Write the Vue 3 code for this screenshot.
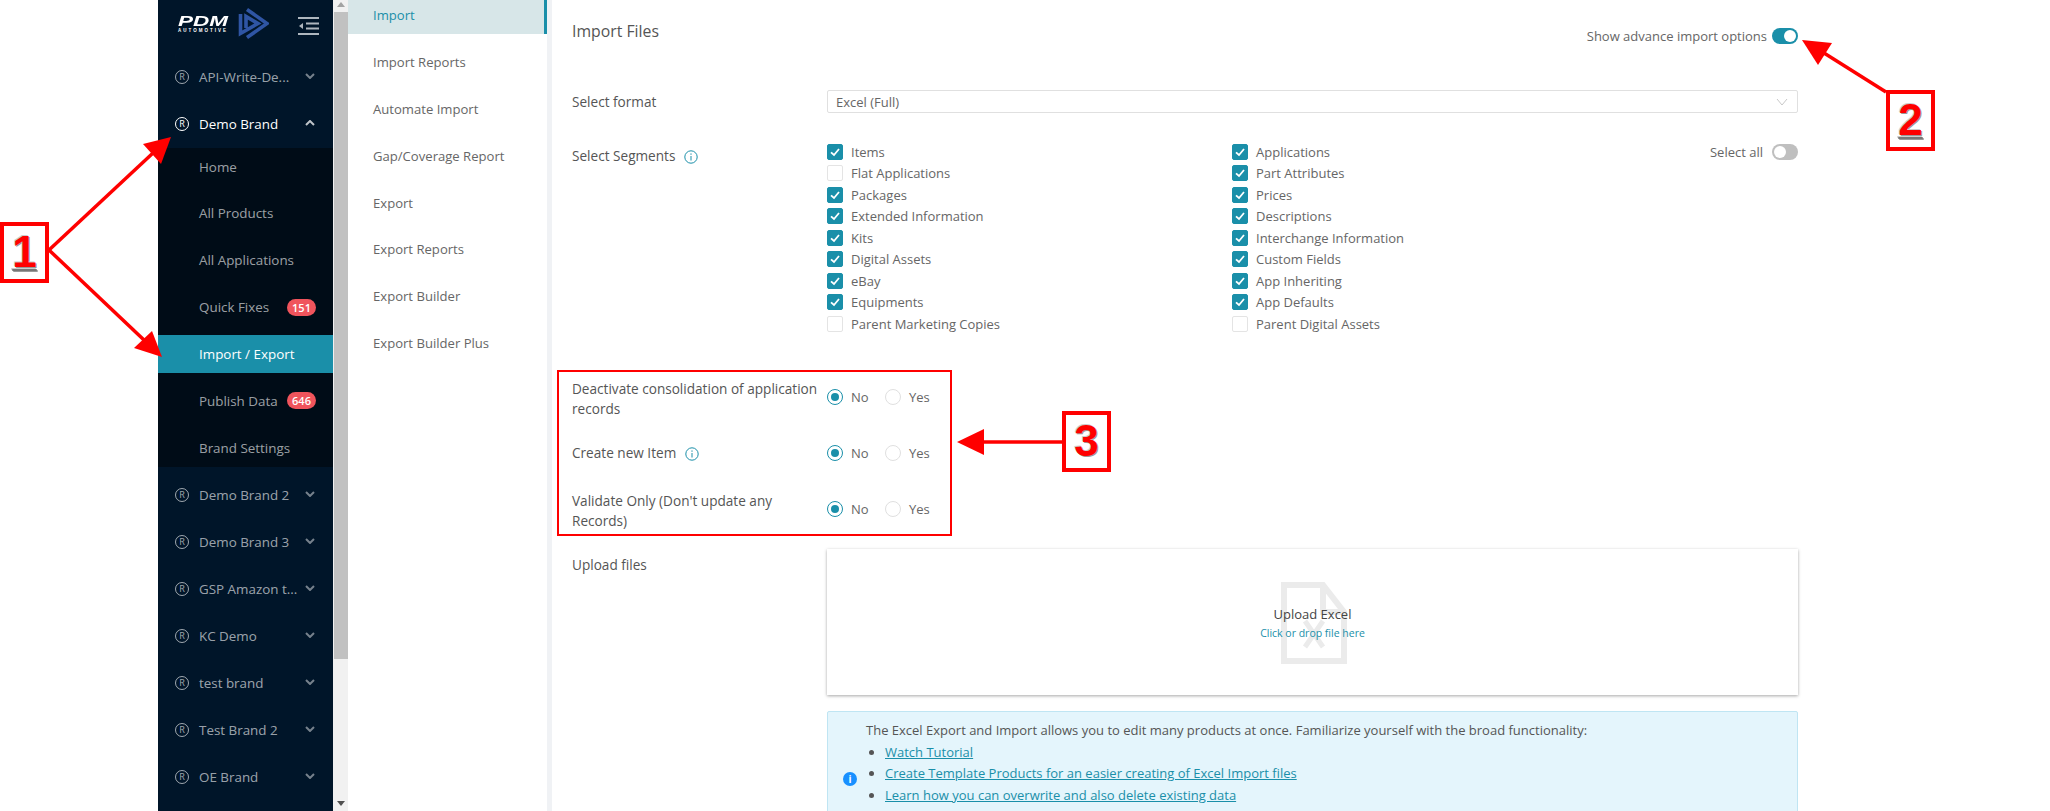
<script setup>
const brandsTop = ['API-Write-De...']
const sub = [
  { t: 'Home' }, { t: 'All Products' }, { t: 'All Applications' },
  { t: 'Quick Fixes', badge: 151 }, { t: 'Import / Export', active: true },
  { t: 'Publish Data', badge: 646 }, { t: 'Brand Settings' }
]
const brandsBottom = ['Demo Brand 2', 'Demo Brand 3', 'GSP Amazon t...', 'KC Demo', 'test brand', 'Test Brand 2', 'OE Brand']
const menu = ['Import', 'Import Reports', 'Automate Import', 'Gap/Coverage Report', 'Export', 'Export Reports', 'Export Builder', 'Export Builder Plus']
const col1 = [['Items', 1], ['Flat Applications', 0], ['Packages', 1], ['Extended Information', 1], ['Kits', 1], ['Digital Assets', 1], ['eBay', 1], ['Equipments', 1], ['Parent Marketing Copies', 0]]
const col2 = [['Applications', 1], ['Part Attributes', 1], ['Prices', 1], ['Descriptions', 1], ['Interchange Information', 1], ['Custom Fields', 1], ['App Inheriting', 1], ['App Defaults', 1], ['Parent Digital Assets', 0]]
</script>

<template>
  <div class="page">
    <aside class="sidebar">
      <div class="logo-row">
        <div class="logo-text"><span class="pdm">PDM</span><span class="auto">AUTOMOTIVE</span></div>
        <svg class="logo-mark" viewBox="0 0 31 31" width="31" height="31">
          <path d="M9 1.5 L29 15.5 L9 29.5" fill="none" stroke="#2f55a4" stroke-width="3.6" />
          <path d="M2.5 6 V25.5 L20 15.5 L8 8.5 V20" fill="none" stroke="#2f55a4" stroke-width="3.6" />
        </svg>
        <svg class="collapse" viewBox="0 0 21 18" width="21" height="18">
          <path d="M0 1 H21 M8 6.5 H21 M8 11.5 H21 M0 17 H21" stroke="#aeb6be" stroke-width="2" fill="none" />
          <path d="M1 9 L5 6 V12 Z" fill="#aeb6be" />
        </svg>
      </div>
      <div v-for="b in brandsTop" :key="b" class="brand">
        <span class="reg">R</span><span class="brand-name">{{ b }}</span>
        <svg class="chev" viewBox="0 0 10 6" width="10" height="6"><path d="M1 1 L5 5 L9 1" /></svg>
      </div>
      <div class="brand open">
        <span class="reg">R</span><span class="brand-name">Demo Brand</span>
        <svg class="chev" viewBox="0 0 10 6" width="10" height="6"><path d="M1 5 L5 1 L9 5" /></svg>
      </div>
      <div class="sublist">
        <div v-for="s in sub" :key="s.t" class="subitem" :class="{ active: s.active }">
          <span>{{ s.t }}</span>
          <span v-if="s.badge" class="badge">{{ s.badge }}</span>
        </div>
      </div>
      <div v-for="b in brandsBottom" :key="b" class="brand">
        <span class="reg">R</span><span class="brand-name">{{ b }}</span>
        <svg class="chev" viewBox="0 0 10 6" width="10" height="6"><path d="M1 1 L5 5 L9 1" /></svg>
      </div>
    </aside>

    <div class="scrollbar">
      <span class="arrow up"></span>
      <div class="thumb"></div>
      <span class="arrow down"></span>
    </div>

    <nav class="menu">
      <div v-for="(m, i) in menu" :key="m" class="menu-item" :class="{ active: i === 0 }">{{ m }}</div>
    </nav>
    <div class="strip"></div>

    <main class="main">
      <header class="head">
        <h1 class="title">Import Files</h1>
        <div class="toggle-wrap">
          <span>Show advance import options</span>
          <span class="switch on"><i></i></span>
        </div>
      </header>

      <section class="row format">
        <label class="lbl">Select format</label>
        <div class="select">
          <span>Excel (Full)</span>
          <svg viewBox="0 0 12 8" width="12" height="8"><path d="M1 1 L6 7 L11 1" fill="none" stroke="#c8c8c8" stroke-width="1" /></svg>
        </div>
      </section>

      <section class="row segs">
        <label class="lbl seg-lbl">Select Segments
          <svg class="info" viewBox="0 0 14 14" width="14" height="14"><circle cx="7" cy="7" r="6.2" /><path d="M7 6 V10.5 M7 3.4 V4.8" /></svg>
        </label>
        <div class="seg-cols">
          <div class="col one">
            <div v-for="c in col1" :key="c[0]" class="check-row">
              <span class="box" :class="{ on: c[1] }"><svg v-if="c[1]" viewBox="0 0 16 16" width="16" height="16"><path d="M4 8.3 L7 11 L12 5" /></svg></span>
              <span>{{ c[0] }}</span>
            </div>
          </div>
          <div class="col">
            <div v-for="c in col2" :key="c[0]" class="check-row">
              <span class="box" :class="{ on: c[1] }"><svg v-if="c[1]" viewBox="0 0 16 16" width="16" height="16"><path d="M4 8.3 L7 11 L12 5" /></svg></span>
              <span>{{ c[0] }}</span>
            </div>
          </div>
          <div class="select-all">
            <span>Select all</span>
            <span class="switch"><i></i></span>
          </div>
        </div>
      </section>

      <section class="row adv first">
        <label class="lbl">Deactivate consolidation of application records</label>
        <div class="radios lift">
          <span class="radio on"></span><span class="r-no">No</span><span class="radio"></span><span>Yes</span>
        </div>
      </section>
      <section class="row adv second">
        <label class="lbl">Create new Item
          <svg class="info" viewBox="0 0 14 14" width="14" height="14"><circle cx="7" cy="7" r="6.2" /><path d="M7 6 V10.5 M7 3.4 V4.8" /></svg>
        </label>
        <div class="radios">
          <span class="radio on"></span><span class="r-no">No</span><span class="radio"></span><span>Yes</span>
        </div>
      </section>
      <section class="row adv third">
        <label class="lbl">Validate Only (Don't update any Records)</label>
        <div class="radios lift">
          <span class="radio on"></span><span class="r-no">No</span><span class="radio"></span><span>Yes</span>
        </div>
      </section>

      <section class="row upload-row">
        <label class="lbl upload-lbl">Upload files</label>
        <div>
          <div class="upload">
            <svg class="file" viewBox="0 0 66 82" width="66" height="82">
              <path d="M3 3 H42 L63 30 V79 H3 Z M42 3 V30 H63" fill="none" stroke="#ebebeb" stroke-width="6" />
              <path d="M24 39 L42 65 M42 39 L24 65" fill="none" stroke="#ebebeb" stroke-width="5" />
            </svg>
            <div class="up-title">Upload Excel</div>
            <div class="up-sub">Click or drop file here</div>
          </div>
          <div class="alert">
            <span class="alert-icon">i</span>
            <div class="alert-body">
              <div>The Excel Export and Import allows you to edit many products at once. Familiarize yourself with the broad functionality:</div>
              <ul>
                <li><a>Watch Tutorial</a></li>
                <li><a>Create Template Products for an easier creating of Excel Import files</a></li>
                <li><a>Learn how you can overwrite and also delete existing data</a></li>
              </ul>
            </div>
          </div>
        </div>
      </section>
    </main>

    <svg class="arrows" width="2050" height="811" viewBox="0 0 2050 811">
      <g fill="#ff0000" stroke="none">
        <path d="M171 137 L143 144 L161 164 Z" />
        <path d="M162 357 L134 348 L152 331 Z" />
        <path d="M1802 40 L1832 43 L1818 65 Z" />
        <path d="M957 442 L984 429 V455 Z" />
      </g>
      <g stroke="#ff0000" stroke-width="3.5" fill="none">
        <path d="M49 250 L153 153" />
        <path d="M49 250 L144 340" />
        <path d="M1886 92 L1824 53" />
        <path d="M1062 442 H984" />
      </g>
    </svg>
    <div class="note n1">1</div>
    <div class="note n2">2</div>
    <div class="note n3">3</div>
    <div class="frame"></div>
  </div>
</template>

<style>
html, body { margin: 0; padding: 0; background: #fff; }
</style>

<style scoped>
.page {
  position: relative;
  display: flex;
  width: 2050px;
  height: 811px;
  overflow: hidden;
  padding-left: 158px;
  box-sizing: border-box;
  background: #fff;
  font-family: "Open Sans", "Noto Sans", sans-serif;
  font-size: 13px;
  color: #666;
}
.sidebar { width: 175px; flex: none; background: #001529; color: rgba(255,255,255,.62); font-size: 13.4px; }
.logo-row { height: 53.5px; position: relative; display: flex; align-items: flex-start; box-sizing: border-box; padding: 8px 0 0 20px; }
.logo-text { display: flex; flex-direction: column; width: 60px; margin-top: 6px; color: #fff; }
.pdm { font: italic 700 15px/13px "Liberation Sans", sans-serif; transform: scaleX(1.5); transform-origin: left; }
.auto { font: 700 4.5px/6px "Liberation Sans", sans-serif; letter-spacing: 2px; margin-top: 1px; white-space: nowrap; }
.collapse { margin: 9px 0 0 29px; }
.brand { height: 47px; display: flex; align-items: center; padding-left: 17px; position: relative; }
.brand.open { color: #fff; }
.reg {
  width: 14px; height: 14px; border: 1px solid currentColor; border-radius: 50%; box-sizing: border-box;
  font-size: 9px; line-height: 12px; text-align: center; margin-right: 10px; flex: none;
}
.brand-name { white-space: nowrap; }
.chev { position: absolute; left: 147px; top: 19px; fill: none; stroke: currentColor; stroke-width: 2; opacity: .75; }
.sublist { background: #000c17; }
.subitem { height: 38px; margin-bottom: 8.9px; padding-left: 41px; display: flex; align-items: center; position: relative; }
.subitem:last-child { margin-bottom: 5px; }
.subitem.active { background: #1a8fa9; color: #fff; }
.badge {
  position: absolute; left: 129px; top: 10.5px; width: 29px; height: 17px; border-radius: 9px;
  background: #f0545c; color: #fff; text-align: center; font-size: 11px; line-height: 17px; font-weight: 600;
}
.scrollbar { width: 15px; flex: none; background: #f1f1f1; position: relative; }
.thumb { position: absolute; top: 12px; left: 1px; right: 0; height: 647px; background: #c1c1c1; }
.arrow { position: absolute; left: 4px; width: 0; height: 0; border-left: 4px solid transparent; border-right: 4px solid transparent; }
.arrow.up { top: 2px; border-bottom: 5px solid #a3a3a3; }
.arrow.down { bottom: 5px; border-top: 5px solid #505050; }
.menu { width: 199px; flex: none; margin-top: -4px; box-sizing: border-box; font-size: 13.1px; }
.menu-item { height: 38px; margin-bottom: 8.9px; padding-left: 25px; display: flex; align-items: center; box-sizing: border-box; color: #666; }
.menu-item.active { background: #d7e6e8; color: #1a8fa9; border-right: 3px solid #1a8fa9; }
.strip { width: 5px; flex: none; background: #f0f2f5; }
.main { flex: 1; min-width: 0; padding: 0 252px 0 20px; overflow: hidden; }
.head { height: 72px; display: flex; justify-content: space-between; align-items: center; }
.title { margin: 0 0 10px; font-size: 15.8px; font-weight: 400; color: #555; }
.toggle-wrap, .select-all { display: flex; align-items: center; gap: 5px; }
.switch { width: 26px; height: 16px; border-radius: 8px; background: #bfbfbf; position: relative; display: inline-block; }
.switch i { position: absolute; left: 2px; top: 2px; width: 12px; height: 12px; border-radius: 50%; background: #fff; }
.switch.on { background: #1a8fa9; }
.switch.on i { left: 12px; }
.row { display: grid; grid-template-columns: 255px 1fr; }
.lbl { color: #555; line-height: 20px; font-weight: 500; font-size: 13.6px; }
.format { margin-top: 18px; align-items: center; }
.select {
  height: 23px; box-sizing: border-box; border: 1px solid #e0e0e0; border-radius: 2px; display: flex;
  align-items: center; justify-content: space-between; padding: 0 9px 0 8px;
}
.segs { margin-top: 27.75px; }
.seg-lbl { padding-top: 5.25px; }
.info { margin-left: 5px; vertical-align: -2.5px; fill: none; stroke: #1a8fa9; stroke-width: 1; }
.seg-cols { display: flex; }
.col { flex: none; }
.col.one { width: 405px; }
.select-all { margin-left: auto; height: 21.5px; gap: 9px; }
.check-row { height: 21.5px; display: flex; align-items: center; gap: 8px; }
.box { width: 16px; height: 16px; border: 1px solid #e4e4e4; border-radius: 2px; box-sizing: border-box; position: relative; background: #fff; flex: none; }
.box.on { background: #1a8fa9; border-color: #1a8fa9; }
.box svg { position: absolute; left: -1px; top: -1px; fill: none; stroke: #fff; stroke-width: 1.8; }
.adv { align-items: center; }
.adv.first { margin-top: 44.75px; }
.adv.second { margin-top: 24px; }
.adv.third { margin-top: 28px; }
.radios { display: flex; align-items: center; }
.radios.lift { margin-bottom: 4px; }
.radio { width: 16px; height: 16px; border: 1px solid #e0e0e0; border-radius: 50%; box-sizing: border-box; position: relative; margin-right: 8px; flex: none; }
.radio.on { border-color: #1a8fa9; }
.radio.on::after { content: ""; position: absolute; left: 3px; top: 3px; width: 8px; height: 8px; border-radius: 50%; background: #1a8fa9; }
.r-no { width: 34px; }
.upload-row { margin-top: 18px; }
.upload-lbl { padding-top: 6px; }
.upload {
  height: 146px; position: relative; background: #fff; box-shadow: 0 1px 3px rgba(0,0,0,.35);
  display: flex; flex-direction: column; align-items: center; padding-top: 55px; box-sizing: border-box;
}
.file { position: absolute; left: 454px; top: 33px; }
.up-title { position: relative; color: #444; line-height: 20px; }
.up-sub { position: relative; color: #1a8fa9; font-size: 10.5px; line-height: 18px; }
.alert {
  margin-top: 16px; background: #e4f5fc; border: 1px solid #bfe5f3; border-radius: 2px; display: flex;
  align-items: center; height: 136px; box-sizing: border-box; padding: 9px 0 41px 15px; position: relative;
}
.alert-icon {
  position: absolute; left: 15px; top: 60px; width: 14px; height: 14px; border-radius: 50%;
  background: #1890ff; color: #fff; font-size: 10px; line-height: 14px; text-align: center; font-weight: 700;
}
.alert-body { margin-left: 23px; line-height: 21.5px; color: #555; }
.alert ul { margin: 0; padding-left: 19px; }
.alert a { color: #1a8fa9; text-decoration: underline; }
.arrows { position: absolute; left: 0; top: 0; pointer-events: none; }
.note {
  position: absolute; box-sizing: border-box; width: 49px; height: 61px; border: 4px solid #f00; background: #fff;
  color: #f00; font: 700 44px/52px "Liberation Sans", sans-serif; text-align: center;
  text-decoration: underline 2px #777; text-underline-offset: 2px;
  text-shadow: -1px -1px 0 #ccc, 1px 1px 0 #999;
}
.n1 { left: 0; top: 222px; }
.n2 { left: 1886px; top: 90px; }
.n3 { left: 1062px; top: 411px; text-decoration: none; }
.frame { position: absolute; left: 557px; top: 370px; width: 395px; height: 166px; box-sizing: border-box; border: 2px solid #f00; pointer-events: none; }
</style>
